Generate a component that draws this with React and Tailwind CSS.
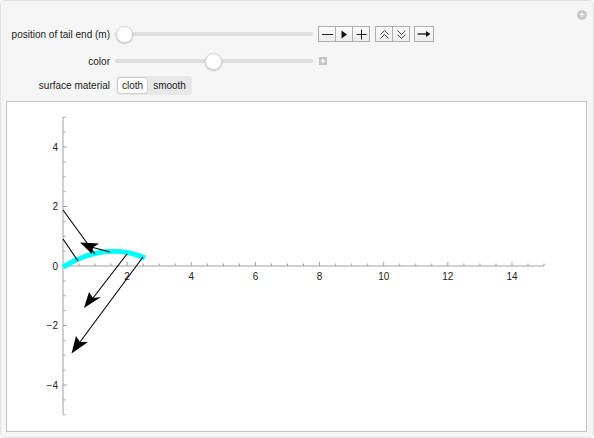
const SX = 32.07
const SY = 29.75
const OX = 63
const OY = 266

function Slider({ pos }) {
  return (
    <div className="relative w-[198px] h-full flex items-center">
      <div className="w-full h-[4px] rounded-full bg-[#dedede]" />
      <div
        className="absolute top-1/2 w-[17px] h-[17px] -mt-[8.5px] rounded-full bg-white border border-[#d4d4d4] shadow-[0_1px_2px_rgba(0,0,0,0.2)]"
        style={{ left: pos - 8.5 }}
      />
    </div>
  )
}

function Btn({ children, first }) {
  return (
    <div className={`w-[18px] h-[16px] flex items-center justify-center bg-gradient-to-b from-[#fdfdfd] to-[#ececec] border border-[#adadad] ${first ? '' : '-ml-px'}`}>
      {children}
    </div>
  )
}

function Plot() {
  const xt = []
  for (let i = 0.5; i <= 15; i += 0.5) xt.push(i)
  const yt = []
  for (let i = -5; i <= 5; i += 0.5) if (i !== 0) yt.push(i)
  return (
    <svg width="578" height="328" className="block">
      <g transform="translate(-7,-102)" fontFamily="Liberation Sans, Arial, sans-serif" fontSize="10">
        <line x1={OX} y1={OY} x2={OX + 15 * SX} y2={OY} stroke="#a0a0a0" strokeWidth="1" />
        <line x1={OX} y1={OY - 5 * SY} x2={OX} y2={OY + 5 * SY} stroke="#a0a0a0" strokeWidth="1" />
        {xt.map((v) => {
          const major = Number.isInteger(v / 2)
          const x = OX + v * SX
          return <line key={'x' + v} x1={x} y1={OY} x2={x} y2={OY - (major ? 4 : 2.5)} stroke="#a0a0a0" />
        })}
        {yt.map((v) => {
          const major = Number.isInteger(v / 2)
          const y = OY - v * SY
          return <line key={'y' + v} x1={OX} y1={y} x2={OX + (major ? 4 : 2.5)} y2={y} stroke="#a0a0a0" />
        })}
        {[2, 4, 6, 8, 10, 12, 14].map((v) => (
          <text key={'xl' + v} x={OX + v * SX} y={OY + 14} textAnchor="middle" fill="#222">{v}</text>
        ))}
        {[4, 2, 0, -2, -4].map((v) => (
          <text key={'yl' + v} x={OX - 5} y={OY - v * SY + 3.5} textAnchor="end" fill="#222">{v < 0 ? '−' + -v : v}</text>
        ))}
        <path d="M63,267 Q106,241 145,258" fill="none" stroke="#00ffff" strokeWidth="5" />
        <g stroke="#000" strokeWidth="1.1" fill="#000">
          <line x1="63" y1="210" x2="95" y2="254" />
          <line x1="63" y1="239" x2="78" y2="261" />
          <line x1="110" y1="252" x2="93" y2="247.5" />
          <polygon points="80,242.5 99,243.5 93,247.5 92,254" stroke="none" />
          <line x1="127" y1="254" x2="93" y2="298" />
          <polygon points="84,308 89,292 93,298 101,297" stroke="none" />
          <line x1="143" y1="257" x2="80" y2="342" />
          <polygon points="71.5,353.5 76,336 80,342 88,342" stroke="none" />
        </g>
      </g>
    </svg>
  )
}

export default function App() {
  return (
    <div className="w-[594px] h-[438px] bg-white font-['Liberation_Sans',Arial,sans-serif] text-[10px] text-[#222]">
      <div className="relative w-[594px] h-[438px] bg-[#f6f6f6] border border-[#e2e2e2] rounded-[5px] pt-[24px]">
        <div className="absolute right-[6px] top-[9px] w-[10px] h-[10px] rounded-full bg-[#c8c8c8] flex items-center justify-center text-white text-[9px] leading-none font-bold">+</div>

        <div className="flex items-center h-[18px]">
          <div className="w-[109px] text-right whitespace-nowrap">position of tail end (m)</div>
          <div className="ml-[5px] h-full"><Slider pos={9.5} /></div>
          <div className="flex ml-[5px]">
            <Btn first>
              <div className="w-[11px] h-px bg-[#222]" />
            </Btn>
            <Btn>
              <svg width="8" height="9" viewBox="0 0 8 9"><polygon points="1.5,0.5 7,4.5 1.5,8.5" fill="#111" /></svg>
            </Btn>
            <Btn>
              <svg width="11" height="11" viewBox="0 0 11 11"><path d="M5.5 0.5V10.5M0.5 5.5H10.5" stroke="#222" strokeWidth="1" /></svg>
            </Btn>
          </div>
          <div className="flex ml-[5px]">
            <Btn first>
              <svg width="11" height="11" viewBox="0 0 11 11" fill="none" stroke="#333" strokeWidth="0.9"><path d="M1.5 5.5L5.5 1.5L9.5 5.5M1.5 9.5L5.5 5.5L9.5 9.5" /></svg>
            </Btn>
            <Btn>
              <svg width="11" height="11" viewBox="0 0 11 11" fill="none" stroke="#333" strokeWidth="0.9"><path d="M1.5 1.5L5.5 5.5L9.5 1.5M1.5 5.5L5.5 9.5L9.5 5.5" /></svg>
            </Btn>
          </div>
          <div className="flex ml-[4px]">
            <div className="w-[20px] h-[16px] flex items-center justify-center bg-gradient-to-b from-[#fdfdfd] to-[#ececec] border border-[#adadad]">
              <svg width="14" height="8" viewBox="0 0 14 8"><path d="M0.5 4H10" stroke="#111" strokeWidth="1.3" /><polygon points="9,1 13.5,4 9,7" fill="#111" /></svg>
            </div>
          </div>
        </div>

        <div className="flex items-center h-[18px] mt-[9px]">
          <div className="w-[109px] text-right">color</div>
          <div className="ml-[5px] h-full"><Slider pos={98.5} /></div>
          <div className="ml-[6px] w-[8px] h-[8px] bg-[#c4c4c4] flex items-center justify-center">
            <svg width="6" height="6" viewBox="0 0 6 6"><path d="M3 0.5V5.5M0.5 3H5.5" stroke="#fff" strokeWidth="1.2" /></svg>
          </div>
        </div>

        <div className="flex items-center h-[19px] mt-[6px]">
          <div className="w-[109px] text-right">surface material</div>
          <div className="ml-[6px] flex h-[19px] bg-[#e8e8e8] rounded-[4px] p-[1px]">
            <div className="px-[4px] flex items-center bg-white border border-[#cfcfcf] rounded-[4px]">cloth</div>
            <div className="px-[5px] flex items-center">smooth</div>
          </div>
        </div>

        <div className="ml-[5px] mt-[6px] w-[581px] h-[331px] bg-white border border-[#c4c4c4]">
          <Plot />
        </div>
      </div>
    </div>
  )
}
